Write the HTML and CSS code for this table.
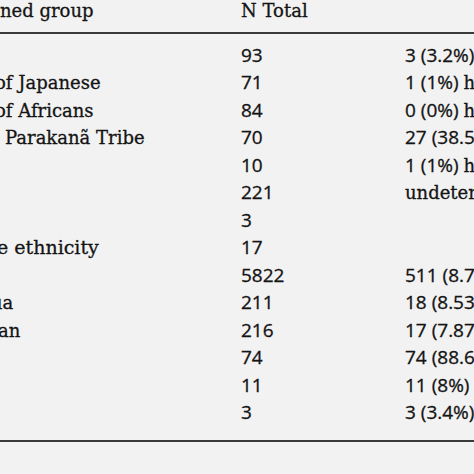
FILE: index.html
```html
<!DOCTYPE html>
<html>
<head>
<meta charset="utf-8">
<link rel="stylesheet" href="styles.css">
</head>
<body>
<div class="table">
  <div class="head">
    <div class="c1 serif-h">ned group</div>
    <div class="c2 serif-h">N Total</div>
    <div class="c3 serif-h"></div>
  </div>
  <div class="body">
    <div class="c1 serif"></div><div class="c2">93</div><div class="c3">3 (3.2%) <span class="serif">heterozygous</span></div>
    <div class="c1 serif in-5">of Japanese</div><div class="c2">71</div><div class="c3">1 (1%) <span class="serif">homozygous</span></div>
    <div class="c1 serif in-5">of Africans</div><div class="c2">84</div><div class="c3">0 (0%) <span class="serif">homozygous</span></div>
    <div class="c1 serif in5">Parakanã Tribe</div><div class="c2">70</div><div class="c3">27 (38.57%)</div>
    <div class="c1 serif"></div><div class="c2">10</div><div class="c3">1 (1%) <span class="serif">heterozygous</span></div>
    <div class="c1 serif"></div><div class="c2">221</div><div class="c3"><span class="serif">undetermined</span></div>
    <div class="c1 serif"></div><div class="c2">3</div><div class="c3"></div>
    <div class="c1 serif wide in-3">e ethnicity</div><div class="c2">17</div><div class="c3"></div>
    <div class="c1 serif"></div><div class="c2">5822</div><div class="c3">511 (8.78%)</div>
    <div class="c1 serif in-9">ua</div><div class="c2">211</div><div class="c3">18 (8.53%)</div>
    <div class="c1 serif in-2">an</div><div class="c2">216</div><div class="c3">17 (7.87%)</div>
    <div class="c1 serif"></div><div class="c2">74</div><div class="c3">74 (88.6%)</div>
    <div class="c1 serif"></div><div class="c2">11</div><div class="c3">11 (8%)</div>
    <div class="c1 serif"></div><div class="c2">3</div><div class="c3">3 (3.4%)</div>
  </div>
</div>
</body>
</html>
```
FILE: styles.css
```css
html, body {
  margin: 0;
  padding: 0;
  overflow: hidden;
  background: #f2f2f2;
  width: 474px;
  height: 474px;
}
.table {
  width: 474px;
  color: #141414;
  font-family: "Open Sans", sans-serif;
  font-size: 19px;
  white-space: nowrap;
  -webkit-text-stroke: 0.3px #141414;
}
.serif {
  font-family: "DejaVu Serif", serif;
  font-size: 18px;
}
.serif.wide {
  font-size: 19px;
}
.serif-h {
  font-family: "DejaVu Serif", serif;
  font-size: 18px;
}
.head {
  display: grid;
  grid-template-columns: 241px 164px 1fr;
  line-height: 22px;
  padding-bottom: 10px;
  border-bottom: 2px solid #3a3a3a;
}
.body {
  display: grid;
  grid-template-columns: 241px 164px 1fr;
  grid-auto-rows: 27.5px;
  align-items: baseline;
  line-height: 27.5px;
  padding-top: 7.5px;
  padding-bottom: 13.5px;
  border-bottom: 2px solid #3a3a3a;
}
.c1 { overflow: hidden; }
.in-5 { text-indent: -5px; }
.in-3 { text-indent: -3px; }
.in-2 { text-indent: -2px; }
.in-9 { text-indent: -9px; }
.in5 { text-indent: 5px; }
```
